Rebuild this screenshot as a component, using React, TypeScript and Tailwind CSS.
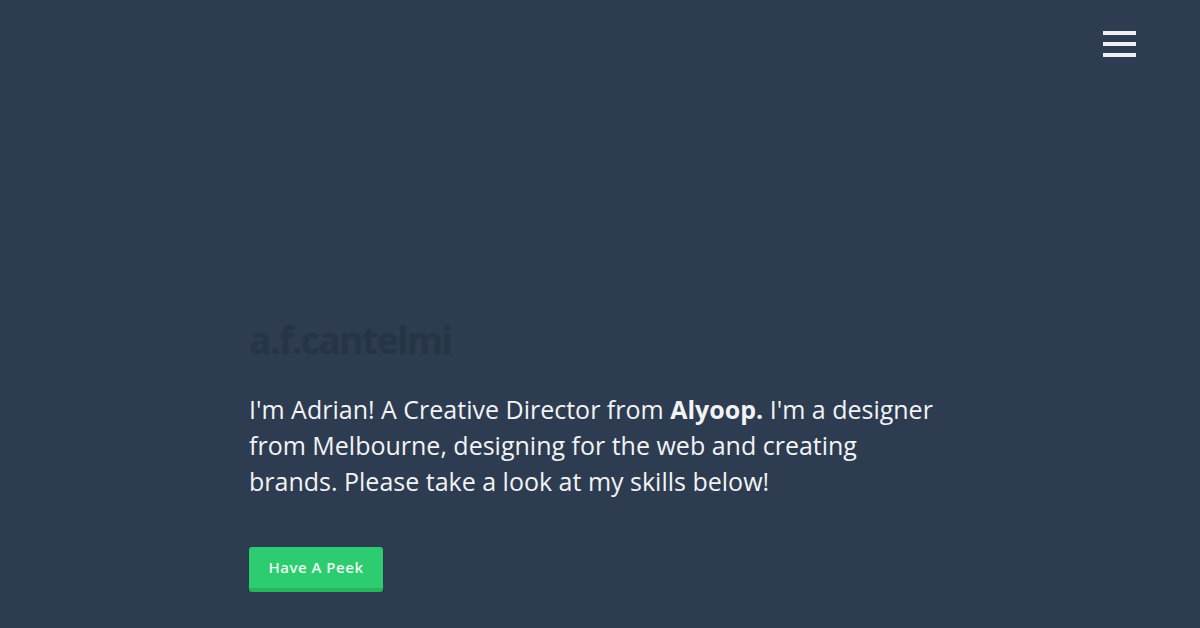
export default function App() {
  return (
    <div
      className="relative h-[628px] w-full overflow-hidden bg-[#2d3c50] text-[#f1f3f5]"
      style={{ fontFamily: '"Open Sans", "Noto Sans", sans-serif' }}
    >
      <button className="absolute right-[64px] top-[31px] flex w-[33px] flex-col gap-[7px]">
        <span className="h-[4px] w-full bg-[#eef1f4]" />
        <span className="h-[4px] w-full bg-[#eef1f4]" />
        <span className="h-[4px] w-full bg-[#eef1f4]" />
      </button>

      <main className="mx-auto w-[702px] pt-[314px]">
        <h1 className="text-[37px] font-bold leading-[52px] tracking-[-1.5px] text-[#263445]">
          a.f.cantelmi
        </h1>
        <p className="mt-[25px] text-[25px] leading-[36px]">
          I'm Adrian! A Creative Director from <strong className="font-bold">Alyoop.</strong> I'm a designer
          <br />
          from Melbourne, designing for the web and creating
          <br />
          brands. Please take a look at my skills below!
        </p>
        <button className="mt-[48px] h-[45px] w-[134px] rounded-[3px] border-b-[4px] border-[#27b561] bg-[#2ecc71] text-[15px] font-semibold tracking-[0.5px] text-[#e9f9ef]">
          Have A Peek
        </button>
      </main>
    </div>
  );
}
